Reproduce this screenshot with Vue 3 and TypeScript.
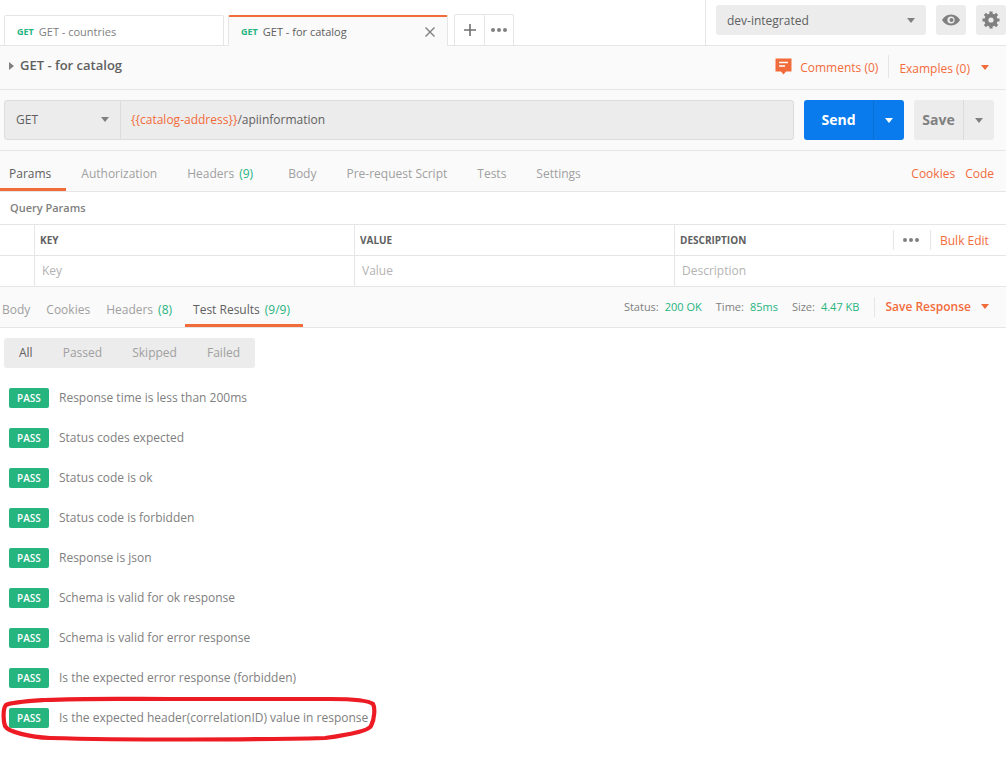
<script setup lang="ts">
const requestTabs = [
  { label: 'Params', active: true },
  { label: 'Authorization' },
  { label: 'Headers', count: '(9)' },
  { label: 'Body' },
  { label: 'Pre-request Script' },
  { label: 'Tests' },
  { label: 'Settings' }
]

const responseTabs = [
  { label: 'Body' },
  { label: 'Cookies' },
  { label: 'Headers', count: '(8)' },
  { label: 'Test Results', count: '(9/9)', active: true }
]

const filters = ['All', 'Passed', 'Skipped', 'Failed']

const catalogVar = '{' + '{catalog-address}' + '}'

const results = [
  'Response time is less than 200ms',
  'Status codes expected',
  'Status code is ok',
  'Status code is forbidden',
  'Response is json',
  'Schema is valid for ok response',
  'Schema is valid for error response',
  'Is the expected error response (forbidden)',
  'Is the expected header(correlationID) value in response'
]
</script>

<template>
  <div class="page">
    <div class="tabbar">
      <div class="tabs">
        <div class="tab">
          <span class="method">GET</span>
          <span>GET - countries</span>
        </div>
        <div class="tab active">
          <span class="method">GET</span>
          <span>GET - for catalog</span>
          <svg class="close" width="12" height="12" viewBox="0 0 12 12">
            <path d="M1.5 1.5l9 9M10.5 1.5l-9 9" stroke="#808080" stroke-width="1.4" fill="none" />
          </svg>
        </div>
        <div class="tab-actions">
          <div class="tab-action">
            <svg width="14" height="14" viewBox="0 0 14 14">
              <path d="M7 1v12M1 7h12" stroke="#707070" stroke-width="1.6" fill="none" />
            </svg>
          </div>
          <div class="tab-action">
            <span class="dots"><i></i><i></i><i></i></span>
          </div>
        </div>
      </div>
      <div class="env">
        <div class="env-select">
          <span>dev-integrated</span>
          <i class="caret grey"></i>
        </div>
        <div class="env-btn">
          <svg width="20" height="14" viewBox="0 0 20 14">
            <path d="M10 1.5C5.8 1.5 2.6 4.4 1 7c1.6 2.6 4.8 5.5 9 5.5s7.4-2.9 9-5.5C17.4 4.4 14.2 1.5 10 1.5z" fill="#808080" />
            <circle cx="10" cy="7" r="3.6" fill="#ececec" />
            <circle cx="10.5" cy="7" r="2" fill="#808080" />
          </svg>
        </div>
        <div class="env-btn">
          <svg width="18" height="18" viewBox="0 0 18 18">
            <circle cx="9" cy="9" r="4.6" fill="none" stroke="#808080" stroke-width="4" />
            <path d="M7.4 0.5h3.2v3h-3.2zM7.4 14.5h3.2v3h-3.2zM0.5 7.4h3v3.2h-3zM14.5 7.4h3v3.2h-3zM1.8 4L4 1.8 6.200 4 4 6.200zM11.800 14L14 11.800 16.200 14 14 16.200zM14 1.800L16.200 4 14 6.200 11.800 4zM4 11.800L6.200 14 4 16.200 1.800 14z" fill="#808080" />
          </svg>
        </div>
      </div>
    </div>

    <div class="titlebar">
      <div class="title">
        <i class="arrow"></i>
        <span>GET - for catalog</span>
      </div>
      <div class="title-links">
        <svg width="17" height="17" viewBox="0 0 17 17">
          <path d="M0.5 0.5h16v13h-5.5l-2.5 3-2.5-3h-5.5z" fill="#f26b3a" />
          <path d="M4 4.5h9M4 8h6" stroke="#fff" stroke-width="1.5" fill="none" />
        </svg>
        <span class="comments">Comments (0)</span>
        <span class="sep"></span>
        <span class="examples">Examples (0)</span>
        <i class="caret orange"></i>
      </div>
    </div>

    <div class="urlbar">
      <div class="url-input">
        <div class="url-method">
          <span>GET</span>
          <i class="caret grey"></i>
        </div>
        <div class="url-text"><span class="var">{{ catalogVar }}</span>/apiinformation</div>
      </div>
      <div class="send">
        <span class="send-label">Send</span>
        <span class="send-drop"><i class="caret white"></i></span>
      </div>
      <div class="save">
        <span class="save-label">Save</span>
        <span class="save-drop"><i class="caret grey"></i></span>
      </div>
    </div>

    <div class="reqtabs">
      <div class="tablist">
        <div v-for="t in requestTabs" :key="t.label" class="reqtab" :class="{ on: t.active, counted: t.count }">
          {{ t.label }}<span v-if="t.count" class="count">{{ t.count }}</span>
        </div>
      </div>
      <div class="reqlinks">
        <span>Cookies</span>
        <span>Code</span>
      </div>
    </div>

    <div class="query-title">Query Params</div>
    <div class="qrow qhead">
      <div class="c0"></div>
      <div class="c1">KEY</div>
      <div class="c2">VALUE</div>
      <div class="c3">
        <span>DESCRIPTION</span>
        <div class="qtools">
          <span class="qdots"><span class="dots"><i></i><i></i><i></i></span></span>
          <span class="bulk">Bulk Edit</span>
        </div>
      </div>
    </div>
    <div class="qrow qbody">
      <div class="c0"></div>
      <div class="c1">Key</div>
      <div class="c2">Value</div>
      <div class="c3">Description</div>
    </div>

    <div class="restabs">
      <div class="tablist">
        <div v-for="t in responseTabs" :key="t.label" class="restab" :class="{ on: t.active }">
          {{ t.label }}<span v-if="t.count" class="count">{{ t.count }}</span>
        </div>
      </div>
      <div class="resmeta">
        <span>Status:<b>200 OK</b></span>
        <span>Time:<b>85ms</b></span>
        <span>Size:<b>4.47 KB</b></span>
        <span class="sep tall"></span>
        <span class="save-response">Save Response</span>
        <i class="caret orange"></i>
      </div>
    </div>

    <div class="results">
      <div class="filters">
        <span v-for="(f, i) in filters" :key="f" class="filter" :class="{ on: i === 0 }">{{ f }}</span>
      </div>
      <div v-for="r in results" :key="r" class="result">
        <span class="pass">PASS</span>
        <span class="result-name">{{ r }}</span>
      </div>
    </div>

    <svg class="scribble" width="380" height="50" viewBox="0 0 380 50">
      <path d="M45 6C90 4 130 5 170 5L330 5C350 5 368 6 373 10C375 13 375 24 371 32C368 38 340 42 325 44C250 46 120 46 50 44C30 43 8 38 5 32C3 26 3 14 6 11C12 8 30 7 45 6Z" fill="none" stroke="#ed1c24" stroke-width="4.2" />
    </svg>
  </div>
</template>

<style>
html,
body {
  margin: 0;
  background: #fff;
}
</style>

<style scoped>
.page {
  position: relative;
  width: 1006px;
  height: 760px;
  overflow: hidden;
  background: #fff;
  font-family: "Open Sans", sans-serif;
  font-size: 12px;
  color: #808080;
}

.tabbar {
  display: flex;
  justify-content: space-between;
  height: 45px;
  border-bottom: 1px solid #e6e6e6;
}

.tabs {
  display: flex;
  align-items: flex-end;
  padding-left: 4px;
}

.tab {
  display: flex;
  align-items: center;
  width: 220px;
  height: 30px;
  box-sizing: border-box;
  margin-right: 4px;
  padding: 2px 12px 0;
  border: 1px solid #e6e6e6;
  border-bottom: none;
  border-radius: 2px 2px 0 0;
  font-size: 11px;
  color: #808080;
  white-space: nowrap;
}

.tab.active {
  position: relative;
  margin-bottom: -1px;
  height: 31px;
  padding-top: 0;
  border-top: 2px solid #f26b3a;
  background: #fafafa;
  color: #606060;
}

.method {
  margin-right: 5px;
  font-size: 9px;
  font-weight: 700;
  color: #26b47f;
}

.close {
  margin-left: auto;
  margin-right: -1px;
}

.tab-actions {
  display: flex;
  margin-left: 2px;
  height: 30px;
  border: 1px solid #e6e6e6;
  border-bottom: none;
  border-radius: 2px 2px 0 0;
}

.tab-action {
  display: flex;
  align-items: center;
  justify-content: center;
  width: 29px;
}

.tab-action + .tab-action {
  width: 28px;
  border-left: 1px solid #e6e6e6;
}

.dots {
  display: flex;
  gap: 2px;
}

.dots i {
  width: 4px;
  height: 4px;
  border-radius: 50%;
  background: #808080;
}

.env {
  display: flex;
  align-items: flex-start;
  gap: 10px;
  width: 301px;
  padding: 5px 0 0 10px;
  border-left: 1px solid #e6e6e6;
  box-sizing: border-box;
}

.env-select {
  display: flex;
  align-items: center;
  justify-content: space-between;
  width: 210px;
  height: 30px;
  box-sizing: border-box;
  padding: 0 11px;
  border-radius: 3px;
  background: #ececec;
  font-size: 12px;
  color: #606060;
}

.env-btn {
  display: flex;
  align-items: center;
  justify-content: center;
  width: 30px;
  height: 30px;
  border-radius: 3px;
  background: #ececec;
}

.caret {
  display: inline-block;
  width: 0;
  height: 0;
  border-left: 4.5px solid transparent;
  border-right: 4.5px solid transparent;
  border-top: 5px solid #808080;
}

.caret.orange {
  border-top-color: #f26b3a;
}

.caret.white {
  border-top-color: #fff;
}

.titlebar {
  display: flex;
  align-items: center;
  justify-content: space-between;
  height: 43px;
  padding: 0 17px 0 9px;
  border-bottom: 1px solid #e6e6e6;
  background: #fafafa;
}

.title {
  display: flex;
  align-items: center;
  margin-top: -6px;
  font-size: 13px;
  font-weight: 600;
  color: #606060;
}

.arrow {
  width: 0;
  height: 0;
  margin-right: 6px;
  margin-top: 3px;
  border-top: 4px solid transparent;
  border-bottom: 4px solid transparent;
  border-left: 5px solid #808080;
}

.title-links {
  display: flex;
  align-items: center;
  margin-top: -3px;
  color: #f26b3a;
  font-size: 12px;
}

.comments {
  margin-left: 8px;
  padding-top: 3px;
}

.examples {
  padding-top: 5px;
}

.sep {
  display: inline-block;
  width: 1px;
  height: 23px;
  margin: 0 10px;
  background: #e6e6e6;
}

.title-links .caret {
  margin-left: 11px;
  margin-top: 3px;
}

.urlbar {
  display: flex;
  align-items: center;
  height: 60px;
  padding: 0 12px 0 4px;
  border-bottom: 1px solid #e6e6e6;
  background: #fafafa;
}

.url-input {
  display: flex;
  width: 790px;
  height: 40px;
  box-sizing: border-box;
  border: 1px solid #dcdcdc;
  border-radius: 3px;
  background: #ececec;
  font-size: 12px;
  color: #606060;
}

.url-method {
  display: flex;
  align-items: center;
  justify-content: space-between;
  width: 116px;
  box-sizing: border-box;
  padding: 0 11px 2px;
  border-right: 1px solid #dcdcdc;
}

.url-text {
  display: flex;
  align-items: center;
  padding: 0 0 2px 10px;
}

.var {
  color: #f26b3a;
}

.send {
  display: flex;
  width: 100px;
  height: 40px;
  margin-left: 10px;
  border-radius: 3px;
  background: #097bed;
  color: #fff;
  font-size: 14px;
  font-weight: 700;
}

.send-label {
  display: flex;
  align-items: center;
  justify-content: center;
  width: 69px;
  padding-bottom: 2px;
}

.send-drop {
  display: flex;
  flex: 1;
  align-items: center;
  justify-content: center;
  border-left: 1px solid #0a6fd4;
}

.save {
  display: flex;
  width: 80px;
  height: 40px;
  margin-left: 10px;
  border-radius: 3px;
  background: #ececec;
  color: #808080;
  font-size: 14px;
  font-weight: 700;
}

.save-label {
  display: flex;
  align-items: center;
  justify-content: center;
  width: 49px;
  padding-bottom: 2px;
}

.save-drop {
  display: flex;
  flex: 1;
  align-items: center;
  justify-content: center;
  border-left: 1px solid #dcdcdc;
}

.reqtabs {
  display: flex;
  justify-content: space-between;
  height: 40px;
  border-bottom: 1px solid #e6e6e6;
  background: #fafafa;
}

.tablist {
  display: flex;
}

.reqtab {
  display: flex;
  align-items: center;
  height: 40px;
  box-sizing: border-box;
  padding: 7px 9px 0;
  margin-right: 12px;
  border-bottom: 3px solid transparent;
  color: #a0a0a0;
  white-space: pre;
}

.reqtab.counted {
  margin-right: 17px;
}

.reqtab.on {
  padding-right: 15px;
  margin-right: 6px;
  color: #606060;
  border-bottom-color: #f26b3a;
}

.count {
  margin-left: 5px;
  color: #26b47f;
}

.reqlinks {
  display: flex;
  align-items: center;
  gap: 10px;
  padding: 4px 12px 0 0;
  color: #f26b3a;
}

.query-title {
  display: flex;
  align-items: center;
  height: 33px;
  box-sizing: border-box;
  padding: 0 0 2px 10px;
  border-bottom: 1px solid #e6e6e6;
  font-size: 11px;
  font-weight: 600;
  color: #808080;
}

.qrow {
  display: flex;
  height: 31px;
  box-sizing: border-box;
  border-bottom: 1px solid #e6e6e6;
}

.qrow > div {
  display: flex;
  align-items: center;
  box-sizing: border-box;
  border-left: 1px solid #e6e6e6;
}

.qrow > .c0 {
  width: 34px;
  border-left: none;
}

.qrow > .c1 {
  width: 320px;
}

.qrow > .c2 {
  width: 320px;
}

.qrow > .c3 {
  flex: 1;
}

.qhead {
  font-size: 10px;
  font-weight: 700;
  color: #606060;
}

.qhead > div {
  padding-left: 5px;
}

.qhead > .c0 {
  padding: 0;
}

.qtools {
  display: flex;
  align-items: center;
  margin-left: auto;
  height: 20px;
  font-weight: 400;
}

.qdots {
  display: flex;
  align-items: center;
  justify-content: center;
  width: 38px;
  height: 20px;
  box-sizing: border-box;
  padding-right: 3px;
  border-left: 1px solid #e6e6e6;
  border-right: 1px solid #e6e6e6;
}

.bulk {
  width: 75px;
  box-sizing: border-box;
  padding-left: 9px;
  font-size: 12px;
  color: #f26b3a;
}

.qbody {
  color: #b3b3b3;
}

.qbody > div {
  padding: 0 0 2px 7px;
}

.qbody > .c0 {
  padding: 0;
}

.restabs {
  display: flex;
  justify-content: space-between;
  height: 40px;
  border-bottom: 1px solid #e6e6e6;
  background: #fafafa;
}

.restab {
  display: flex;
  align-items: center;
  height: 40px;
  box-sizing: border-box;
  padding: 7px 2px 0;
  margin-right: 12px;
  border-bottom: 3px solid transparent;
  color: #a0a0a0;
  white-space: pre;
}

.restab.on {
  padding: 7px 13px 0 8px;
  margin-left: -1px;
  color: #606060;
  border-bottom-color: #f26b3a;
}

.resmeta {
  display: flex;
  align-items: center;
  padding-right: 17px;
  padding-bottom: 1px;
  font-size: 11px;
  color: #808080;
}

.resmeta > span {
  margin-right: 14px;
}

.resmeta b {
  margin-left: 6px;
  font-weight: 400;
  color: #26b47f;
}

.resmeta .sep.tall {
  height: 20px;
  margin: 0 10px 0 1px;
}

.resmeta .save-response {
  margin-right: 10px;
  font-size: 12px;
  font-weight: 600;
  color: #f26b3a;
}

.results {
  padding: 10px 0 0 4px;
}

.filters {
  display: flex;
  align-items: center;
  justify-content: space-between;
  width: 251px;
  height: 30px;
  box-sizing: border-box;
  padding: 0 15px 2px;
  margin-bottom: 10px;
  border-radius: 3px;
  background: #ececec;
  color: #a0a0a0;
}

.filter.on {
  color: #606060;
}

.result {
  display: flex;
  align-items: center;
  height: 40px;
  padding-left: 5px;
  color: #808080;
}

.result-name {
  padding-bottom: 2px;
}

.pass {
  display: flex;
  align-items: center;
  justify-content: center;
  width: 40px;
  height: 20px;
  margin-right: 10px;
  border-radius: 2px;
  background: #26b47f;
  color: #fff;
  font-size: 10px;
  font-weight: 600;
}

.scribble {
  position: absolute;
  left: 0;
  top: 694px;
}
</style>
